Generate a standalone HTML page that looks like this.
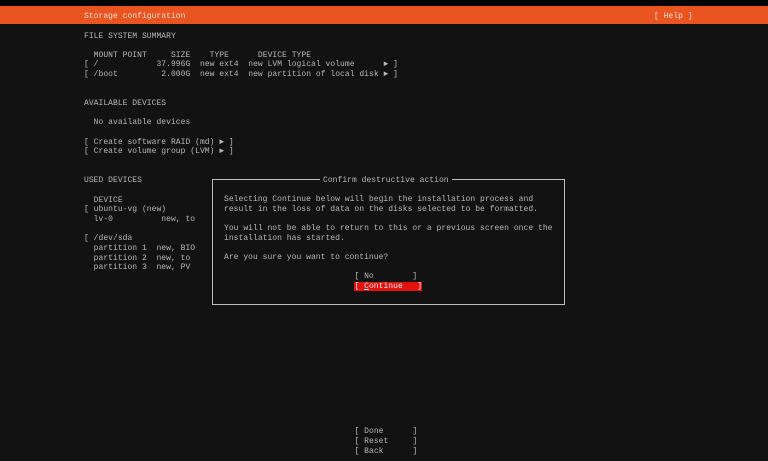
<!DOCTYPE html>
<html><head><style>
html,body{margin:0;padding:0;background:#121212;width:768px;height:461px;overflow:hidden}
.top{position:absolute;left:0;top:0;width:768px;height:6px;background:#050505}
.bar{position:absolute;left:0;top:6px;width:768px;height:18px;background:#e95420}
pre{margin:0;font-family:"Liberation Mono",monospace;font-size:8px;line-height:9.65px;letter-spacing:0.03px;color:#b8b8b8;white-space:pre;position:absolute}
#main{left:84px;top:12.2px}
.dlg{position:absolute;left:212px;top:179px;width:351px;height:124px;border:1px solid #bdbdbd;background:#121212}
.title{position:absolute;left:320px;top:176px;background:#121212;padding:0 3px}
.hl{background:#e3120e;color:#eee}
</style></head><body>
<div class="top"></div><div class="bar"></div>
<pre id="main"><span style="color:#f3e0d6">Storage configuration                                                                                                 [ Help ]</span>

FILE SYSTEM SUMMARY

  MOUNT POINT     SIZE    TYPE      DEVICE TYPE
[ /            37.996G  new ext4  new LVM logical volume      ► ]
[ /boot         2.000G  new ext4  new partition of local disk ► ]


AVAILABLE DEVICES

  No available devices

[ Create software RAID (md) ► ]
[ Create volume group (LVM) ► ]


USED DEVICES

  DEVICE
[ ubuntu-vg (new)
  lv-0          new, to

[ /dev/sda
  partition 1  new, BIO
  partition 2  new, to
  partition 3  new, PV
















                                                        [ Done      ]
                                                        [ Reset     ]
                                                        [ Back      ]</pre>
<div class="dlg"></div>
<pre class="title">Confirm destructive action</pre>
<pre style="left:224px;top:195.2px">Selecting Continue below will begin the installation process and
result in the loss of data on the disks selected to be formatted.

You will not be able to return to this or a previous screen once the
installation has started.

Are you sure you want to continue?

                           [ No        ]
                           <span class="hl">[ <u>C</u>ontinue   ]</span></pre>
</body></html>
